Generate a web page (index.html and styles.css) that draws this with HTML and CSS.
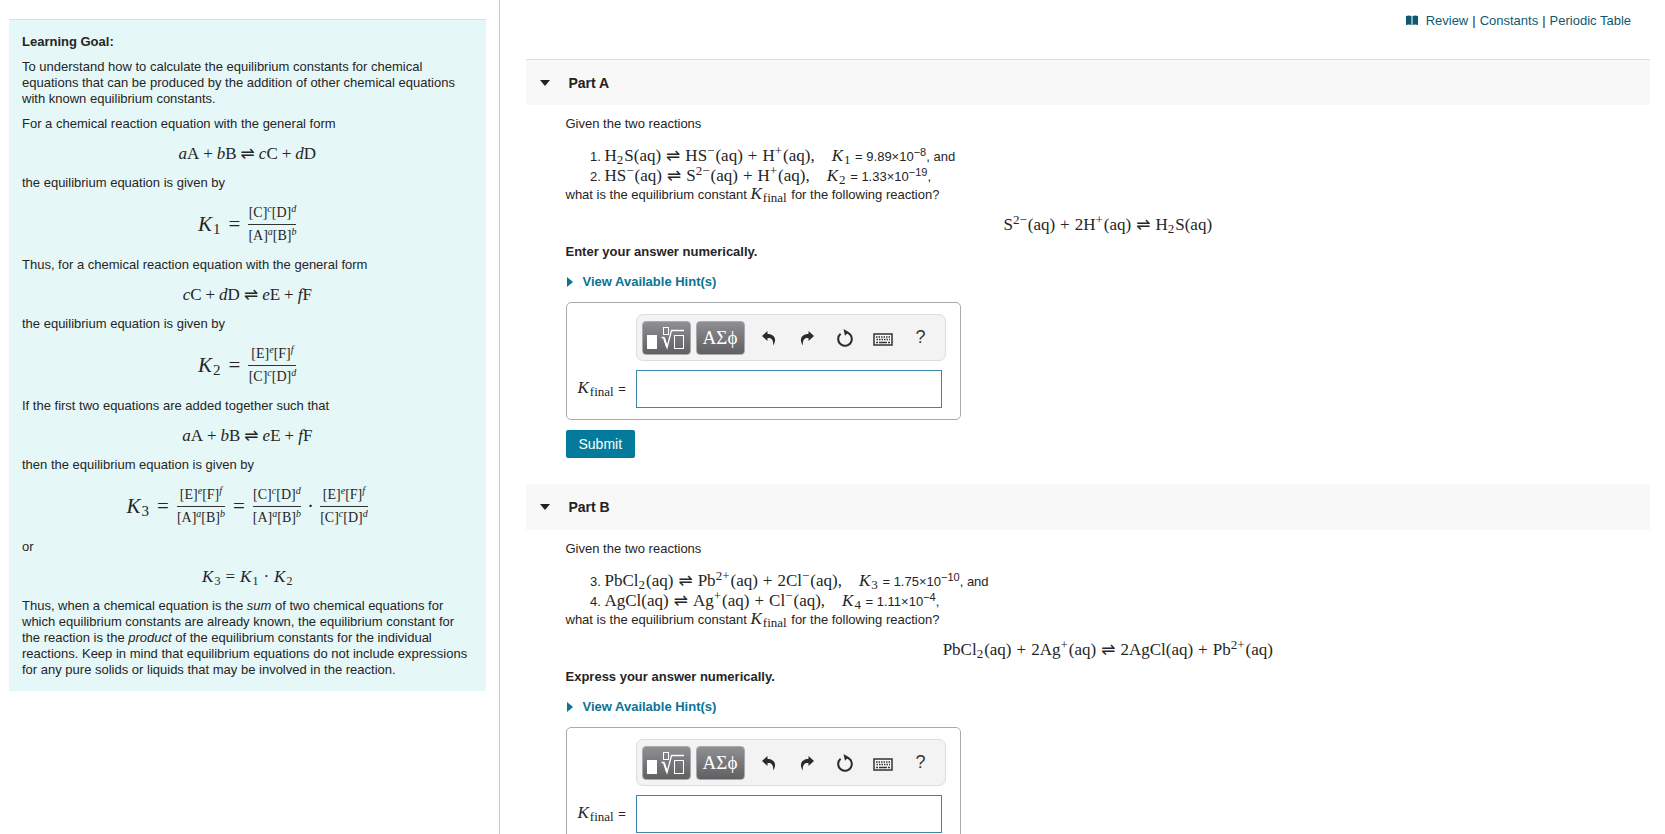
FILE: index.html
```
<!DOCTYPE html>
<html lang="en">
<head>
  <meta charset="UTF-8">
  <title>Equilibrium Constants</title>
  <meta name="viewport" content="width=device-width, initial-scale=1.0">
  <link rel="stylesheet" href="styles.css">
</head>
<body>
  <!-- Shared icons -->
  <svg class="sprite" aria-hidden="true">
    <symbol id="icon-template" viewBox="0 0 40 24">
      <rect x="1" y="9" width="10" height="14" fill="#fff"/>
      <g fill="none" stroke="#fff">
        <rect x="17.500" y="1.500" width="5" height="7"/>
        <path d="M15.500 11.500L18 11.500L21 21.500L25.500 4.500H38" stroke-width="1.300"/>
        <path d="M18 12L21 21" stroke-width="2"/>
        <rect x="28.500" y="9.500" width="9" height="13"/>
      </g>
    </symbol>
    <symbol id="icon-undo" viewBox="0 0 16 16">
      <path d="M6.500 1L1 6L6.500 11V8C10 7.600 12.500 9 12.200 15.500C16.300 9.500 13.500 4 6.500 4Z" fill="#2b2b2b"/>
    </symbol>
    <symbol id="icon-reset" viewBox="0 0 18 18">
      <path d="M9 3.200A6.800 6.800 0 1 1 4.600 4.800" fill="none" stroke="#2b2b2b" stroke-width="2"/>
      <path d="M7.500 0L12.500 3L9 6.800Z" fill="#2b2b2b"/>
    </symbol>
    <symbol id="icon-keyboard" viewBox="0 -4 20 17">
      <rect x="1" y="1" width="18" height="11" fill="#f8f8f8" stroke="#333" stroke-width="1.500"/>
      <path d="M3 4H17" stroke="#333" stroke-width="1.500" stroke-dasharray="1.500 1"/>
      <path d="M3.500 6.500H17" stroke="#333" stroke-width="1.500" stroke-dasharray="1.500 1"/>
      <path d="M3 9.500H5M6 9.500H14M15 9.500H17" stroke="#333" stroke-width="1.500"/>
    </symbol>
    <symbol id="icon-down" viewBox="0 0 10 6">
      <path d="M0 0H10L5 6Z" fill="#222"/>
    </symbol>
    <symbol id="icon-right" viewBox="0 0 6 10">
      <path d="M0 0L6 5L0 10Z" fill="#0b7394"/>
    </symbol>
    <symbol id="icon-book" viewBox="0 0 12 11">
      <path d="M0 1Q3 0 5.500 1V10Q3 9 0 10ZM6.500 1Q9 0 12 1V10Q9 9 6.500 10Z" fill="#0c5a70"/>
    </symbol>
  </svg>

  <div class="page">
    <aside class="sidebar">
      <section class="goal">
        <h2>Learning Goal:</h2>
        <p>To understand how to calculate the equilibrium constants for chemical equations that can be produced by the addition of other chemical equations with known equilibrium constants.</p>
        <p>For a chemical reaction equation with the general form</p>
        <div class="math equation"><var>a</var>A<span class="op">+</span><var>b</var>B<span class="arrow">⇌</span><var>c</var>C<span class="op">+</span><var>d</var>D</div>
        <p>the equilibrium equation is given by</p>
        <div class="math ratio">
          <span><var>K</var><sub>1</sub></span>
          <span class="eq">=</span>
          <span class="frac">
            <span>[C]<sup><var>c</var></sup>[D]<sup><var>d</var></sup></span>
            <span>[A]<sup><var>a</var></sup>[B]<sup><var>b</var></sup></span>
          </span>
        </div>
        <p>Thus, for a chemical reaction equation with the general form</p>
        <div class="math equation"><var>c</var>C<span class="op">+</span><var>d</var>D<span class="arrow">⇌</span><var>e</var>E<span class="op">+</span><var>f</var>F</div>
        <p>the equilibrium equation is given by</p>
        <div class="math ratio">
          <span><var>K</var><sub>2</sub></span>
          <span class="eq">=</span>
          <span class="frac">
            <span>[E]<sup><var>e</var></sup>[F]<sup><var>f</var></sup></span>
            <span>[C]<sup><var>c</var></sup>[D]<sup><var>d</var></sup></span>
          </span>
        </div>
        <p>If the first two equations are added together such that</p>
        <div class="math equation"><var>a</var>A<span class="op">+</span><var>b</var>B<span class="arrow">⇌</span><var>e</var>E<span class="op">+</span><var>f</var>F</div>
        <p>then the equilibrium equation is given by</p>
        <div class="math ratio">
          <span><var>K</var><sub>3</sub></span>
          <span class="eq">=</span>
          <span class="frac">
            <span>[E]<sup><var>e</var></sup>[F]<sup><var>f</var></sup></span>
            <span>[A]<sup><var>a</var></sup>[B]<sup><var>b</var></sup></span>
          </span>
          <span class="eq">=</span>
          <span class="frac">
            <span>[C]<sup><var>c</var></sup>[D]<sup><var>d</var></sup></span>
            <span>[A]<sup><var>a</var></sup>[B]<sup><var>b</var></sup></span>
          </span>
          <span class="dot">·</span>
          <span class="frac">
            <span>[E]<sup><var>e</var></sup>[F]<sup><var>f</var></sup></span>
            <span>[C]<sup><var>c</var></sup>[D]<sup><var>d</var></sup></span>
          </span>
        </div>
        <p>or</p>
        <div class="math equation"><var>K</var><sub>3</sub><span class="rel">=</span><var>K</var><sub>1</sub><span class="rel">·</span><var>K</var><sub>2</sub></div>
        <p>Thus, when a chemical equation is the <em>sum</em> of two chemical equations for which equilibrium constants are already known, the equilibrium constant for the reaction is the <em>product</em> of the equilibrium constants for the individual reactions. Keep in mind that equilibrium equations do not include expressions for any pure solids or liquids that may be involved in the reaction.</p>
      </section>
    </aside>

    <main class="content">
      <nav class="links">
        <svg class="book" aria-hidden="true"><use href="#icon-book"/></svg>
        <a href="#review">Review</a> <span>|</span>
        <a href="#constants">Constants</a> <span>|</span>
        <a href="#periodic">Periodic Table</a>
      </nav>

      <section class="part">
        <h3><button type="button" class="part-header"><svg class="down" aria-hidden="true"><use href="#icon-down"/></svg>Part A</button></h3>
        <div class="part-body">
          <p>Given the two reactions</p>
          <ol class="reactions">
            <li><span class="math">H<sub>2</sub>S(aq)<span class="arrow">⇌</span>HS<sup>−</sup>(aq)<span class="op">+</span>H<sup>+</sup>(aq),<span class="constant"><var>K</var><sub>1</sub></span></span> = 9.89×10<sup>−8</sup>, and</li>
            <li><span class="math">HS<sup>−</sup>(aq)<span class="arrow">⇌</span>S<sup>2−</sup>(aq)<span class="op">+</span>H<sup>+</sup>(aq),<span class="constant"><var>K</var><sub>2</sub></span></span> = 1.33×10<sup>−19</sup>,</li>
          </ol>
          <p>what is the equilibrium constant <span class="math"><var>K</var><sub>final</sub></span> for the following reaction?</p>
          <div class="math final">S<sup>2−</sup>(aq)<span class="op">+</span>2H<sup>+</sup>(aq)<span class="arrow">⇌</span>H<sub>2</sub>S(aq)</div>
          <p class="prompt">Enter your answer numerically.</p>
          <a class="hints" href="#hints-a"><svg class="right" aria-hidden="true"><use href="#icon-right"/></svg>View Available Hint(s)</a>
          <form class="answer-form">
            <div class="answer-box">
              <div class="toolbar">
                <button type="button" class="key" aria-label="Templates"><svg class="template"><use href="#icon-template"/></svg></button>
                <button type="button" class="key">ΑΣϕ</button>
                <button type="button" class="tool" aria-label="Undo"><svg class="undo"><use href="#icon-undo"/></svg></button>
                <button type="button" class="tool" aria-label="Redo"><svg class="undo redo"><use href="#icon-undo"/></svg></button>
                <button type="button" class="tool" aria-label="Reset"><svg class="reset"><use href="#icon-reset"/></svg></button>
                <button type="button" class="tool" aria-label="Keyboard shortcuts"><svg class="keyboard"><use href="#icon-keyboard"/></svg></button>
                <button type="button" class="tool">?</button>
              </div>
              <label for="answer-a"><span class="math"><var>K</var><sub>final</sub></span> =</label>
              <input type="text" id="answer-a">
            </div>
            <button type="submit" class="submit">Submit</button>
          </form>
        </div>
      </section>

      <section class="part">
        <h3><button type="button" class="part-header"><svg class="down" aria-hidden="true"><use href="#icon-down"/></svg>Part B</button></h3>
        <div class="part-body">
          <p>Given the two reactions</p>
          <ol class="reactions" start="3">
            <li><span class="math">PbCl<sub>2</sub>(aq)<span class="arrow">⇌</span>Pb<sup>2+</sup>(aq)<span class="op">+</span>2Cl<sup>−</sup>(aq),<span class="constant"><var>K</var><sub>3</sub></span></span> = 1.75×10<sup>−10</sup>, and</li>
            <li><span class="math">AgCl(aq)<span class="arrow">⇌</span>Ag<sup>+</sup>(aq)<span class="op">+</span>Cl<sup>−</sup>(aq),<span class="constant"><var>K</var><sub>4</sub></span></span> = 1.11×10<sup>−4</sup>,</li>
          </ol>
          <p>what is the equilibrium constant <span class="math"><var>K</var><sub>final</sub></span> for the following reaction?</p>
          <div class="math final">PbCl<sub>2</sub>(aq)<span class="op">+</span>2Ag<sup>+</sup>(aq)<span class="arrow">⇌</span>2AgCl(aq)<span class="op">+</span>Pb<sup>2+</sup>(aq)</div>
          <p class="prompt">Express your answer numerically.</p>
          <a class="hints" href="#hints-b"><svg class="right" aria-hidden="true"><use href="#icon-right"/></svg>View Available Hint(s)</a>
          <form class="answer-form">
            <div class="answer-box">
              <div class="toolbar">
                <button type="button" class="key" aria-label="Templates"><svg class="template"><use href="#icon-template"/></svg></button>
                <button type="button" class="key">ΑΣϕ</button>
                <button type="button" class="tool" aria-label="Undo"><svg class="undo"><use href="#icon-undo"/></svg></button>
                <button type="button" class="tool" aria-label="Redo"><svg class="undo redo"><use href="#icon-undo"/></svg></button>
                <button type="button" class="tool" aria-label="Reset"><svg class="reset"><use href="#icon-reset"/></svg></button>
                <button type="button" class="tool" aria-label="Keyboard shortcuts"><svg class="keyboard"><use href="#icon-keyboard"/></svg></button>
                <button type="button" class="tool">?</button>
              </div>
              <label for="answer-b"><span class="math"><var>K</var><sub>final</sub></span> =</label>
              <input type="text" id="answer-b">
            </div>
          </form>
        </div>
      </section>
    </main>
  </div>
</body>
</html>
```

FILE: styles.css
```
* {
  box-sizing: border-box;
}
body {
  margin: 0;
  font-family: "Liberation Sans", Arial, sans-serif;
  font-size: 13px;
  line-height: 16px;
  color: #252525;
  background: #fff;
}
p, h2, h3, ol {
  margin: 0;
}
button {
  font-family: inherit;
  cursor: pointer;
}
.sprite {
  display: none;
}

/* Two panes that scroll on their own */
.page {
  display: grid;
  grid-template-columns: 30% 1fr;
  height: 100vh;
}
.sidebar, .content {
  overflow-y: auto;
  scrollbar-width: none;
}
.sidebar {
  padding: 19px 13px 19px 9px;
  border-right: 1px solid #bccbd5;
}
.content {
  padding: 0 15px 0 26px;
}

/* Learning goal */
.goal {
  display: flex;
  flex-direction: column;
  gap: 9px;
  padding: 13px;
  background: #e6f7f7;
  border-top: 1px solid #d3e2e3;
}
.goal h2 {
  font-size: 13px;
  line-height: 17px;
}

/* Formulas */
.math {
  font-family: "Liberation Serif", "Times New Roman", serif;
  font-size: 17px;
}
p .math, li .math, label .math {
  line-height: 0;
}
sup, sub {
  font-size: 11px;
  line-height: 0;
}
sup {
  vertical-align: 5px;
}
.math sup, .math sub {
  font-size: 12px;
}
.math sup {
  vertical-align: 6px;
}
.math sub {
  vertical-align: -3px;
}
.math var + sub {
  margin-left: 1px;
}
.op {
  margin: 0 4px;
}
.rel {
  margin: 0 5px;
}
.arrow {
  font-family: "DejaVu Sans", sans-serif;
  margin: 0 4px;
  line-height: 0;
}
.constant {
  margin-left: 17px;
}
.equation {
  line-height: 25px;
  text-align: center;
}
.ratio {
  display: flex;
  justify-content: center;
  align-items: center;
  height: 48px;
  font-size: 21px;
}
.math.ratio sub {
  font-size: 15px;
}
.eq {
  margin: 0 8px;
}
.dot {
  margin: 0 6px;
}
.frac {
  display: flex;
  flex-direction: column;
  min-width: 48px;
  font-size: 14px;
  line-height: 22px;
  text-align: center;
}
.frac span + span {
  border-top: 1px solid #333;
}
.math .frac sup {
  font-size: 10px;
  vertical-align: 5px;
}

/* Top links */
.links {
  display: flex;
  justify-content: flex-end;
  align-items: center;
  gap: 4px;
  height: 59px;
  padding: 0 19px 18px 0;
}
.links a {
  color: #0c5a70;
  text-decoration: none;
}
.book {
  width: 12px;
  height: 11px;
  margin-right: 4px;
}

/* Parts */
.part {
  margin-bottom: 26px;
}
.part-header {
  display: flex;
  align-items: center;
  gap: 19px;
  width: 100%;
  height: 46px;
  padding: 0 14px;
  border: 0;
  background: #f8f8f8;
  font-size: 14px;
  font-weight: bold;
  color: #222;
}
.part:nth-of-type(1) .part-header {
  border-top: 1px solid #ddd;
}
.down {
  width: 10px;
  height: 6px;
}
.part-body {
  padding: 11px 0 0 40px;
}
.reactions {
  padding: 15px 0 0 39px;
  line-height: 20px;
}
.part .math sup, .part .math sub {
  margin-right: 1px;
  font-size: 13px;
}
.part .arrow, .part .op {
  margin: 0 5px;
}
.final {
  padding: 12px 0 9px;
  line-height: 20px;
  text-align: center;
}
.prompt {
  font-weight: bold;
}
.hints {
  display: flex;
  align-items: center;
  gap: 10px;
  margin: 14px 0 12px;
  padding-left: 1px;
  font-weight: bold;
  color: #0b7394;
  text-decoration: none;
}
.right {
  width: 6px;
  height: 10px;
}

/* Answer box */
.answer-box {
  display: grid;
  grid-template-columns: auto 306px;
  align-items: center;
  gap: 9px;
  width: 395px;
  padding: 11px 18px 11px 11px;
  border: 1px solid #aaa;
  border-radius: 5px;
}
.toolbar {
  grid-column: 2;
  display: flex;
  align-items: center;
  width: 310px;
  height: 47px;
  padding-left: 5px;
  background: #f3f3f3;
  border: 1px solid #ddd;
  border-radius: 7px;
}
.toolbar button {
  flex-shrink: 0;
}
.key {
  display: flex;
  justify-content: center;
  align-items: center;
  width: 49px;
  height: 34px;
  margin-right: 5px;
  padding: 0;
  border: 1px solid #aaa;
  border-radius: 4px;
  background: linear-gradient(#8f8f94, #606062);
  color: #fff;
  font-family: "Liberation Serif", "Times New Roman", serif;
  font-size: 19px;
}
.tool {
  display: flex;
  justify-content: center;
  align-items: center;
  width: 38px;
  height: 34px;
  padding: 0;
  border: 0;
  background: none;
  color: #333;
  font-size: 18px;
}
.template {
  width: 40px;
  height: 24px;
}
.undo {
  width: 16px;
  height: 16px;
}
.redo {
  transform: scaleX(-1);
}
.reset {
  width: 18px;
  height: 18px;
}
.keyboard {
  width: 20px;
  height: 17px;
}
.answer-box input {
  width: 100%;
  height: 38px;
  padding: 0 8px;
  border: 1px solid #3b85a8;
  font-size: 16px;
}
.submit {
  height: 28px;
  margin-top: 10px;
  padding: 0 13px;
  border: 0;
  border-radius: 2px;
  background: #047a9c;
  color: #fff;
  font-size: 14px;
}
```
